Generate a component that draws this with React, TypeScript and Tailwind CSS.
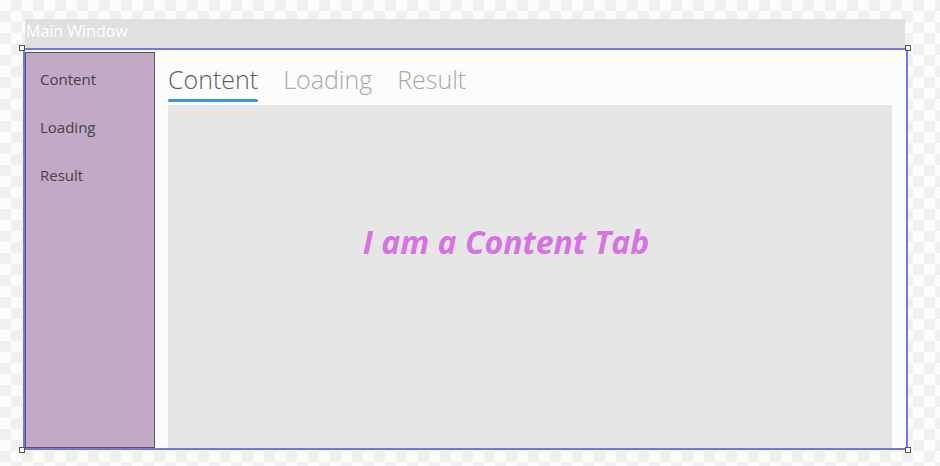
const sideItems = ['Content', 'Loading', 'Result'];
const tabs = ['Content', 'Loading', 'Result'];

function Handle({ className }: { className: string }) {
  return <div className={`absolute w-[6px] h-[6px] border border-[#555] bg-white ${className}`} />;
}

export default function App() {
  return (
    <div className="w-[940px] h-[466px] overflow-hidden bg-[repeating-conic-gradient(#f0f0f0_0_25%,#fcfcfc_0_50%)] bg-size-[22px_22px] pl-[23px] pt-[19px] font-['Open_Sans',sans-serif]">
      <div className="relative w-[885px]">
        {/* title bar */}
        <div className="ml-[2px] w-[880px] h-[29px] bg-[#e0e0e0] text-[16px] text-white leading-[20px] pt-[2px] pl-[1px]">
          Main Window
        </div>

        {/* window frame */}
        <div className="h-[402px] border-2 border-[#7474f0] bg-[#fcfcfc] flex pr-[14px]">
          <div className="w-[130px] mt-[2px] border border-[#555] bg-[#c2a9c6] flex flex-col pl-[14px] pt-[16px] gap-[27px] text-[15px] text-[#444] leading-[21px]">
            {sideItems.map((s) => (
              <div key={s}>{s}</div>
            ))}
          </div>

          <div className="flex-1 flex flex-col pl-[13px]">
            <div className="flex gap-[25px] h-[55px] pt-[12px]">
              {tabs.map((t, i) => (
                <div key={t} className="flex flex-col">
                  <span className={`text-[25px] font-light leading-[35px] ${i === 0 ? 'text-[#5e5e5e]' : 'text-[#a9a9a9]'}`}>{t}</span>
                  {i === 0 && <div className="h-[3px] bg-[#3c98de] rounded-full mt-[2px]" />}
                </div>
              ))}
            </div>
            <div className="flex-1 bg-[#e6e6e6] flex justify-center pt-[116px]">
              <span className="text-[32px] font-bold italic text-[#d772e3] leading-[42px] mr-[48px]">I am a Content Tab</span>
            </div>
          </div>
        </div>

        {/* selection handles */}
        <Handle className="left-[-4px] top-[26px]" />
        <Handle className="right-[-3px] top-[26px]" />
        <Handle className="left-[-4px] bottom-[-3px]" />
        <Handle className="right-[-3px] bottom-[-3px]" />
      </div>
    </div>
  );
}
